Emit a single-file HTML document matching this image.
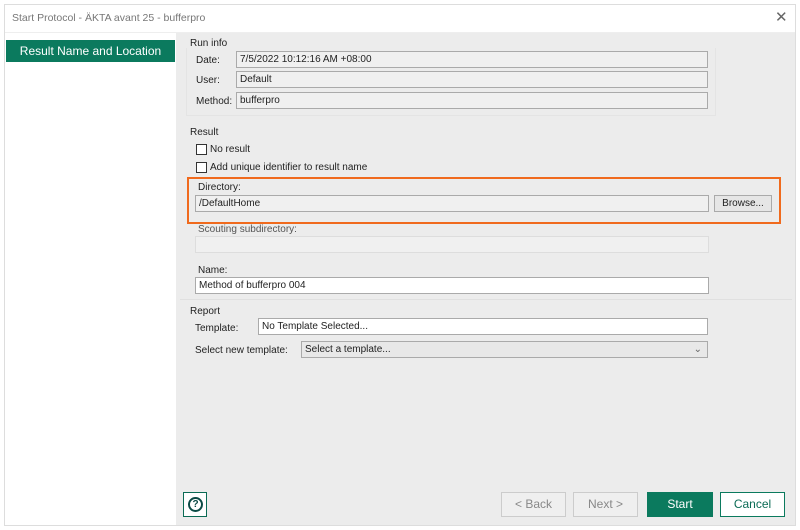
<!DOCTYPE html><html><head><style>
body{margin:0;width:800px;height:530px;background:#fff;font-family:"Liberation Sans",sans-serif;font-size:10px;color:#222;position:relative;overflow:hidden}
div{position:absolute;box-sizing:border-box}
.in{border:1px solid #aaa;background:#f0f0f0;padding:0 3px;height:17px;line-height:15px;font-size:10px}
.w{background:#fff}
.l{font-size:10px}
.cb{width:11px;height:11px;border:1px solid #333;background:#fff}
.btn{height:25px;border:1px solid #ccc;background:#efefef;color:#888;text-align:center;line-height:23px;font-size:12px}
</style></head><body>
<div style="left:4px;top:4px;width:792px;height:522px;border:1px solid #ddd"></div>
<div style="left:12px;top:12px;color:#777;font-size:10.5px">Start Protocol - ÄKTA avant 25 - bufferpro</div>
<div style="left:775px;top:8px;color:#666;font-size:15px">✕</div>
<div style="left:5px;top:32px;width:790px;height:1px;background:#eee"></div>
<div style="left:176px;top:33px;width:619px;height:492px;background:#ececec"></div>
<div style="left:6px;top:40px;width:169px;height:22px;background:#0b7a5e;color:#fff;font-size:12px;text-align:center;line-height:22px">Result Name and Location</div>
<div class="l" style="left:190px;top:38px">Run info</div>
<div style="left:186px;top:48px;width:530px;height:68px;border:1px solid #e4e4e4;border-top:none"></div>
<div class="l" style="left:196px;top:55px">Date:</div><div class="in" style="left:236px;top:51px;width:472px">7/5/2022 10:12:16 AM +08:00</div>
<div class="l" style="left:196px;top:75px">User:</div><div class="in" style="left:236px;top:71px;width:472px">Default</div>
<div class="l" style="left:196px;top:96px">Method:</div><div class="in" style="left:236px;top:92px;width:472px">bufferpro</div>
<div class="l" style="left:190px;top:127px">Result</div>
<div class="cb" style="left:196px;top:144px"></div><div class="l" style="left:210px;top:144px">No result</div>
<div class="cb" style="left:196px;top:162px"></div><div class="l" style="left:210px;top:162px">Add unique identifier to result name</div>
<div style="left:187px;top:177px;width:594px;height:47px;border:2px solid #f06a1d"></div>
<div class="l" style="left:198px;top:182px">Directory:</div>
<div class="in" style="left:195px;top:195px;width:514px">/DefaultHome</div>
<div class="in" style="left:714px;top:195px;width:58px;background:#e6e6e6;text-align:center;padding:0">Browse...</div>
<div class="l" style="left:198px;top:224px;color:#555">Scouting subdirectory:</div>
<div class="in" style="left:195px;top:236px;width:514px;border-color:#ddd"></div>
<div class="l" style="left:198px;top:265px">Name:</div>
<div class="in w" style="left:195px;top:277px;width:514px">Method of bufferpro 004</div>
<div style="left:180px;top:299px;width:612px;height:1px;background:#e0e0e0"></div>
<div class="l" style="left:190px;top:306px">Report</div>
<div class="l" style="left:195px;top:323px">Template:</div><div class="in w" style="left:258px;top:318px;width:450px">No Template Selected...</div>
<div class="l" style="left:195px;top:345px">Select new template:</div><div class="in" style="left:301px;top:341px;width:407px;background:#e8e8e8">Select a template...<span style="position:absolute;right:5px;top:0;color:#666">⌄</span></div>
<div style="left:183px;top:492px;width:24px;height:25px;border:1px solid #0b6b55;background:#fff"><div style="left:4px;top:4px;width:15px;height:15px;border:2px solid #0b4a45;border-radius:50%;text-align:center;font-size:10px;font-weight:bold;line-height:11px;color:#0b4a45">?</div></div>
<div class="btn" style="left:501px;top:492px;width:65px">&lt; Back</div>
<div class="btn" style="left:573px;top:492px;width:65px">Next &gt;</div>
<div class="btn" style="left:647px;top:492px;width:66px;background:#0b7a5e;border-color:#0b7a5e;color:#fff">Start</div>
<div class="btn" style="left:720px;top:492px;width:65px;background:#fff;border-color:#0b7a5e;color:#0b6b55">Cancel</div>
</body></html>
